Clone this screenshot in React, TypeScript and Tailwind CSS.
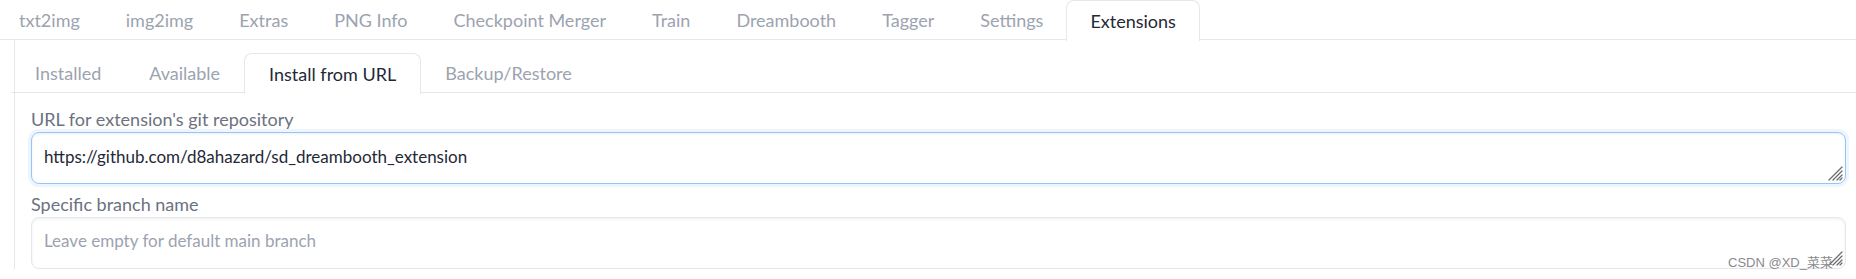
import React from "react";

const topTabs = [
  "txt2img",
  "img2img",
  "Extras",
  "PNG Info",
  "Checkpoint Merger",
  "Train",
  "Dreambooth",
  "Tagger",
  "Settings",
  "Extensions",
];

const subTabs = ["Installed", "Available", "Install from URL", "Backup/Restore"];

function Grip() {
  return (
    <svg
      className="absolute right-[2px] bottom-[2px]"
      width="16"
      height="16"
      viewBox="0 0 16 16"
    >
      <g stroke="#6b6b6b" strokeWidth="1.3" strokeLinecap="round">
        <line x1="15" y1="2" x2="2" y2="15" />
        <line x1="15" y1="6" x2="6" y2="15" />
        <line x1="15" y1="10" x2="10" y2="15" />
        <line x1="15" y1="13" x2="13" y2="15" />
      </g>
    </svg>
  );
}

export default function App() {
  return (
    <div className="relative w-[1856px] h-[279px] overflow-hidden bg-white font-['Lato',sans-serif]">
      {/* top tab bar */}
      <div className="flex h-[40px] border-b border-[#e5e7eb] -ml-[4px]">
        {topTabs.map((t) => {
          const active = t === "Extensions";
          return (
            <div
              key={t}
              className={
                active
                  ? "-mb-px h-[41px] px-[23px] rounded-t-lg border border-b-0 border-[#e5e7eb] bg-white text-[18px] leading-[40px] text-[#1f2937]"
                  : "h-[40px] px-[23px] text-[18px] leading-[40px] text-[#9ca3af]"
              }
            >
              {t}
            </div>
          );
        })}
      </div>

      {/* extensions panel */}
      <div className="ml-[14px] border-l border-[#e5e7eb] pt-[13px]">
        <div className="flex h-[40px] border-b border-[#e5e7eb] -ml-[4px]">
          {subTabs.map((t) => {
            const active = t === "Install from URL";
            return (
              <div
                key={t}
                className={
                  active
                    ? "-mb-px h-[41px] px-[24px] rounded-t-lg border border-b-0 border-[#e5e7eb] bg-white text-[18px] leading-[40px] text-[#1f2937]"
                    : "h-[40px] px-[24px] text-[18px] leading-[40px] text-[#9ca3af]"
                }
              >
                {t}
              </div>
            );
          })}
        </div>

        <div className="pl-4 pr-[10px] pt-[13px]">
          <div className="text-[18px] leading-[26px] text-[#6b7280]">
            URL for extension's git repository
          </div>
          <div className="rounded-lg ring-[3px] ring-[#eef5ff]">
            <div className="relative h-[52px] rounded-lg border border-[#93c5fd] bg-white px-3 pt-[13px] text-[17px] leading-[22px] text-[#1f2937] shadow-[inset_0_1px_3px_rgba(0,0,0,0.07)]">
              https://github.com/d8ahazard/sd_dreambooth_extension
              <Grip />
            </div>
          </div>

          <div className="mt-[7px] text-[18px] leading-[26px] text-[#6b7280]">
            Specific branch name
          </div>
          <div className="relative h-[52px] rounded-lg border border-[#e5e7eb] bg-white px-3 pt-[12px] text-[17px] leading-[22px] text-[#9ca3af] shadow-[inset_0_1px_3px_rgba(0,0,0,0.07)]">
            Leave empty for default main branch
            <Grip />
          </div>
        </div>
      </div>

      <div className="absolute left-[1728px] top-[254px] font-['Liberation_Sans','Noto_Sans_CJK_SC',sans-serif] text-[13px] leading-[18px] text-[#8a8a8a]">
        CSDN @XD_菜菜
      </div>
    </div>
  );
}
